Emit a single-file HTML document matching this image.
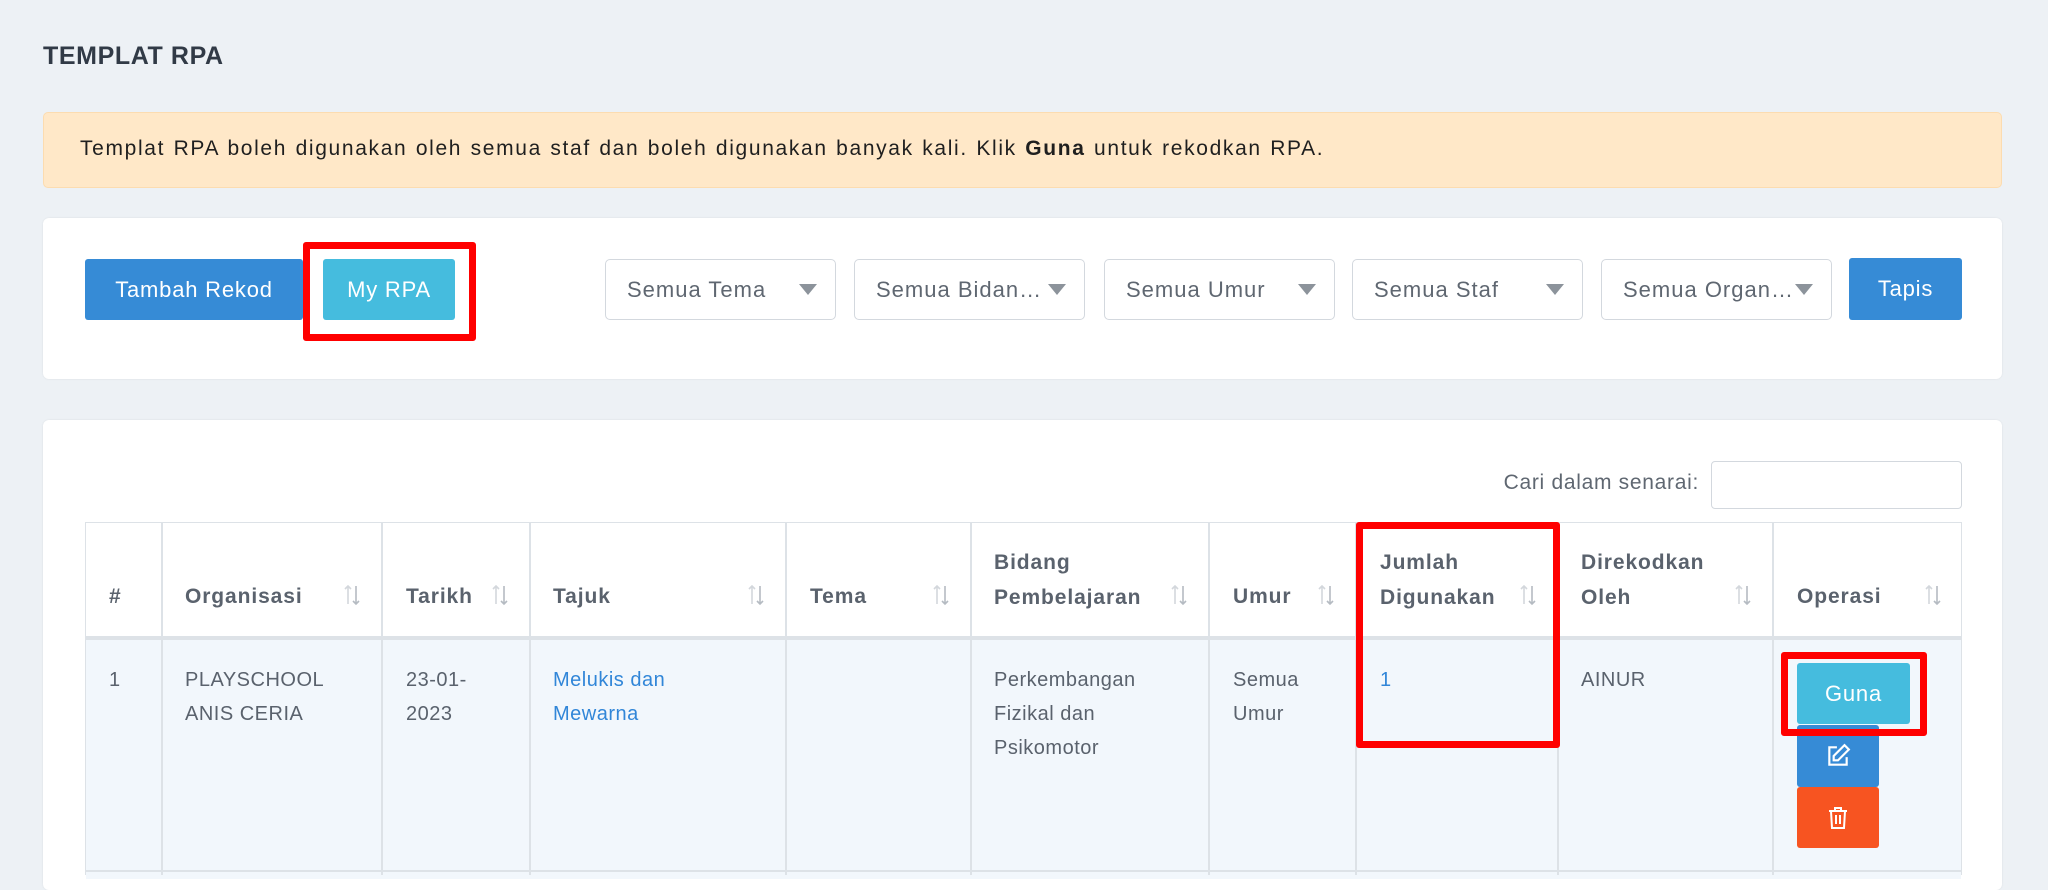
<!DOCTYPE html>
<html><head><meta charset="utf-8"><style>
*{box-sizing:border-box;margin:0;padding:0}
body{width:2048px;height:875px;overflow:hidden;background:#edf1f5;font-family:"Liberation Sans",sans-serif;position:relative;color:#5b636e}
.a{position:absolute}
.title{left:43px;top:42px;font-size:25px;font-weight:bold;color:#313a46;letter-spacing:0.6px}
.alert{left:43px;top:112px;width:1959px;height:76px;background:#ffe8c8;border:1px solid #fcdcb0;border-radius:5px;font-size:21px;color:#1f1f1f;padding:24px 0 0 36px;letter-spacing:1.65px;word-spacing:1px}
.card{background:#fff;border-radius:6px;box-shadow:0 0 2px rgba(0,0,0,.08)}
.btn{position:absolute;color:#fff;font-size:22px;display:flex;align-items:center;justify-content:center;border-radius:3px;letter-spacing:0.8px}
.sel{position:absolute;top:259px;height:61px;width:231px;border:1.5px solid #d3d8de;border-radius:5px;background:#fff;font-size:22px;color:#5f6771;padding:17px 0 0 21px;letter-spacing:1px}
.sel:after{content:"";position:absolute;right:18px;top:24px;border-left:9px solid transparent;border-right:9px solid transparent;border-top:11px solid #8c939b}
.red{position:absolute;border:7px solid #ff0000;border-radius:3px}
.vl{position:absolute;top:522px;width:1.5px;height:353px;background:#dde2e7}
.th{position:absolute;font-size:21px;font-weight:bold;color:#5a626d;line-height:35px;letter-spacing:0.9px}
.td{position:absolute;font-size:20px;color:#5a626d;line-height:34px;letter-spacing:0.5px;top:663px}
.s{position:absolute;top:584px}
</style></head><body>
<div class="a title">TEMPLAT RPA</div>
<div class="a alert">Templat RPA boleh digunakan oleh semua staf dan boleh digunakan banyak kali. Klik <b>Guna</b> untuk rekodkan RPA.</div>

<div class="a card" style="left:43px;top:218px;width:1959px;height:161px"></div>
<div class="btn" style="left:85px;top:259px;width:218px;height:61px;background:#368bd6">Tambah Rekod</div>
<div class="btn" style="left:323px;top:259px;width:132px;height:61px;background:#45bcde">My RPA</div>
<div class="red" style="left:303px;top:242px;width:173px;height:99px"></div>
<div class="sel" style="left:605px">Semua Tema</div>
<div class="sel" style="left:854px">Semua Bidan…</div>
<div class="sel" style="left:1104px">Semua Umur</div>
<div class="sel" style="left:1352px">Semua Staf</div>
<div class="sel" style="left:1601px">Semua Organ…</div>
<div class="btn" style="left:1849px;top:258px;width:113px;height:62px;background:#368bd6">Tapis</div>

<div class="a card" style="left:43px;top:420px;width:1959px;height:470px"></div>
<div class="a" style="left:1400px;top:471px;width:299px;text-align:right;font-size:21px;color:#5f6771;letter-spacing:0.7px">Cari dalam senarai:</div>
<div class="a" style="left:1711px;top:461px;width:251px;height:48px;border:1.5px solid #d3d8de;border-radius:4px;background:#fff"></div>

<div class="a" style="left:85px;top:522px;width:1877px;height:353px;border:1.5px solid #dde2e7;border-bottom:none"></div>
<div class="a" style="left:86px;top:639px;width:1875px;height:240px;background:#f2f7fc"></div>
<div class="a" style="left:85px;top:636px;width:1877px;height:4px;background:#dde2e7"></div>
<div class="a" style="left:85px;top:870px;width:1877px;height:2px;background:#dde2e7"></div>
<div class="vl" style="left:161px"></div><div class="vl" style="left:381px"></div><div class="vl" style="left:529px"></div><div class="vl" style="left:785px"></div><div class="vl" style="left:970px"></div><div class="vl" style="left:1208px"></div><div class="vl" style="left:1355px"></div><div class="vl" style="left:1557px"></div><div class="vl" style="left:1772px"></div>

<div class="th" style="left:109px;top:579px">#</div>
<div class="th" style="left:185px;top:579px">Organisasi</div>
<div class="th" style="left:406px;top:579px">Tarikh</div>
<div class="th" style="left:553px;top:579px">Tajuk</div>
<div class="th" style="left:810px;top:579px">Tema</div>
<div class="th" style="left:994px;top:545px">Bidang<br>Pembelajaran</div>
<div class="th" style="left:1233px;top:579px">Umur</div>
<div class="th" style="left:1380px;top:545px">Jumlah<br>Digunakan</div>
<div class="th" style="left:1581px;top:545px">Direkodkan<br>Oleh</div>
<div class="th" style="left:1797px;top:579px">Operasi</div>

<svg width="0" height="0" style="position:absolute"><defs><g id="ar"><path d="M4 20V2M1 5l3-3 3 3" stroke="#d3d7dc" stroke-width="1.6" fill="none"/><path d="M12 2v18M9 17l3 3 3-3" stroke="#b5bbc2" stroke-width="1.6" fill="none"/></g></defs></svg>
<svg class="s" style="left:344px" width="16" height="22"><use href="#ar"/></svg>
<svg class="s" style="left:492px" width="16" height="22"><use href="#ar"/></svg>
<svg class="s" style="left:748px" width="16" height="22"><use href="#ar"/></svg>
<svg class="s" style="left:933px" width="16" height="22"><use href="#ar"/></svg>
<svg class="s" style="left:1171px" width="16" height="22"><use href="#ar"/></svg>
<svg class="s" style="left:1318px" width="16" height="22"><use href="#ar"/></svg>
<svg class="s" style="left:1520px" width="16" height="22"><use href="#ar"/></svg>
<svg class="s" style="left:1735px" width="16" height="22"><use href="#ar"/></svg>
<svg class="s" style="left:1925px" width="16" height="22"><use href="#ar"/></svg>

<div class="td" style="left:109px">1</div>
<div class="td" style="left:185px">PLAYSCHOOL<br>ANIS CERIA</div>
<div class="td" style="left:406px">23-01-<br>2023</div>
<div class="td" style="left:553px;color:#3186d8">Melukis dan<br>Mewarna</div>
<div class="td" style="left:994px">Perkembangan<br>Fizikal dan<br>Psikomotor</div>
<div class="td" style="left:1233px">Semua<br>Umur</div>
<div class="td" style="left:1380px;color:#3186d8">1</div>
<div class="td" style="left:1581px">AINUR</div>

<div class="btn" style="left:1797px;top:725px;width:82px;height:62px;background:#368bd6"><svg width="26" height="26" viewBox="0 0 24 24" fill="none" stroke="#fff" stroke-width="2"><path d="M11 4H4v16h16v-7"/><path d="M18 2l4 4-10 10H8v-4z"/></svg></div>
<div class="btn" style="left:1797px;top:787px;width:82px;height:61px;background:#f75421"><svg width="22" height="24" viewBox="0 0 22 24" fill="none" stroke="#fff" stroke-width="2"><path d="M2 5h18M8 5V2h6v3M4 5l1 17h12l1-17M9 9v9M13 9v9"/></svg></div>
<div class="btn" style="left:1797px;top:663px;width:113px;height:61px;background:#45bcde">Guna</div>
<div class="red" style="left:1781px;top:652px;width:146px;height:84px"></div>
<div class="red" style="left:1356px;top:522px;width:204px;height:226px"></div>
</body></html>
